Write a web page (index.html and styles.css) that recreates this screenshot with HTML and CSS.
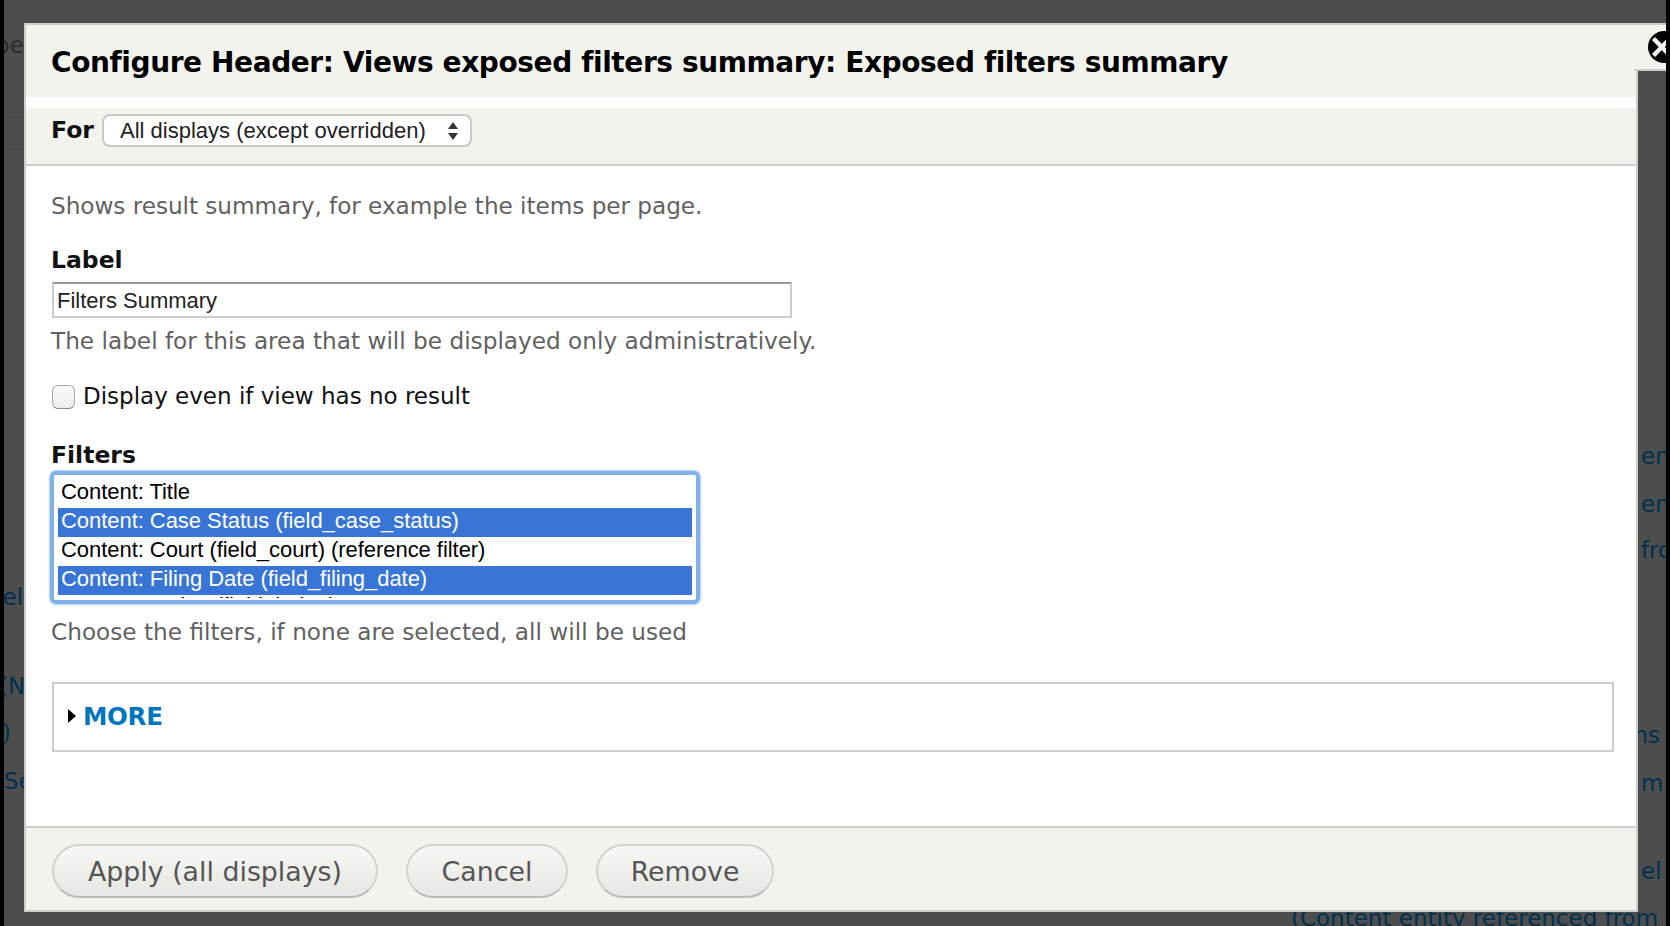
FILE: index.html
```html
<!DOCTYPE html>
<html lang="en">
<head>
<meta charset="utf-8">
<title>Configure Header</title>
<link rel="stylesheet" href="styles.css">
</head>
<body>
<div class="page">
  <div class="backdrop" aria-hidden="true">
    <span class="bg-line bg-h1"></span>
    <span class="bg-line bg-h2"></span>
    <span class="bg-line bg-v1"></span>
    <span class="bg-text t1">Type</span>
    <span class="bg-text t2">Label</span>
    <span class="bg-text t3">(N</span>
    <span class="bg-text t4">)</span>
    <span class="bg-text t5">Se</span>
    <span class="bg-text r1">en</span>
    <span class="bg-text r2">en</span>
    <span class="bg-text r3">fro</span>
    <span class="bg-text r4">ins</span>
    <span class="bg-text r5">m</span>
    <span class="bg-text r6">el</span>
    <span class="bg-text r7">(Content entity referenced from</span>
  </div>
  <section class="dialog">
    <header class="title-bar">
      <h1 class="title">Configure Header: Views exposed filters summary: Exposed filters summary</h1>
    </header>
    <div class="for-bar">
      <span class="for-label">For</span>
      <div class="select">
        <span>All displays (except overridden)</span>
        <svg class="select-arrows" viewBox="0 0 12 20" width="12" height="20" aria-hidden="true">
          <path d="M6 1L11 8H1zM6 19L1 12H11z" fill="#333"/>
        </svg>
      </div>
    </div>
    <div class="content">
      <p class="desc desc-intro">Shows result summary, for example the items per page.</p>
      <div class="field-label">Label</div>
      <input class="text-input" type="text" value="Filters Summary">
      <p class="desc desc-label">The label for this area that will be displayed only administratively.</p>
      <label class="check-row"><input class="checkbox" type="checkbox"><span>Display even if view has no result</span></label>
      <div class="field-label field-filters">Filters</div>
      <div class="listbox">
        <div class="listbox-inner">
          <div class="option">Content: Title</div>
          <div class="option selected">Content: Case Status (field_case_status)</div>
          <div class="option">Content: Court (field_court) (reference filter)</div>
          <div class="option selected">Content: Filing Date (field_filing_date)</div>
          <div class="option option-clipped">Content: Judge (field_judge)</div>
        </div>
      </div>
      <p class="desc desc-filters">Choose the filters, if none are selected, all will be used</p>
      <div class="more-box">
        <span class="more-arrow"></span>
        <a class="more-link">MORE</a>
      </div>
    </div>
    <footer class="footer">
      <button class="btn btn-apply">Apply (all displays)</button>
      <button class="btn btn-cancel">Cancel</button>
      <button class="btn btn-remove">Remove</button>
    </footer>
  </section>
  <div class="close-tab"></div>
  <svg class="close-icon" viewBox="0 0 32 32" width="32" height="32" aria-label="Close">
    <circle cx="16" cy="16" r="16" fill="#000"/>
    <path d="M5.5 7.5L22 24.5M22 7.5L5.5 24.5" stroke="#f3f3ee" stroke-width="4.5" fill="none"/>
  </svg>
</div>
</body>
</html>
```
FILE: styles.css
```css
* { box-sizing: border-box; }
html, body { margin: 0; padding: 0; height: 100%; overflow: hidden; background: #000; }
body { font-family: "DejaVu Sans", sans-serif; }

.page {
  position: relative;
  width: 1662px;
  height: 926px;
  margin: 0 4px;
  background: #4d4d4d;
  overflow: hidden;
}

/* Dimmed page behind the modal */
.backdrop { position: absolute; inset: 0; }
.bg-text {
  position: absolute;
  font-size: 23px;
  line-height: 28px;
  color: #00304f;
  white-space: nowrap;
}
.bg-line { position: absolute; background: #484848; }
.bg-h1 { left: 0; top: 117px; width: 20px; height: 1px; }
.bg-h2 { left: 0; top: 149px; width: 20px; height: 1px; }
.bg-v1 { left: 1268px; top: 912px; width: 1px; height: 14px; }
.t1 { left: -33px; top: 31px; color: #2c2c2c; }
.t2 { left: -43px; top: 583px; }
.t3 { left: -5px; top: 672px; }
.t4 { left: -2px; top: 719px; }
.t5 { left: 0; top: 767px; }
.r1 { left: 1637px; top: 442px; }
.r2 { left: 1637px; top: 490px; }
.r3 { left: 1637px; top: 536px; }
.r4 { left: 1623px; top: 721px; }
.r5 { left: 1637px; top: 769px; }
.r6 { left: 1637px; top: 857px; }
.r7 { left: 1287px; top: 904px; }

/* Close control */
.close-tab {
  position: absolute;
  left: 1630px;
  top: 23px;
  width: 32px;
  height: 48px;
  background: #f3f3ee;
  border-top: 2px solid #ccc;
  border-bottom: 2px solid #ccc;
}
.close-icon { position: absolute; left: 1644px; top: 31px; }

/* Modal */
.dialog {
  position: absolute;
  left: 20px;
  top: 23px;
  width: 1614px;
  height: 889px;
  display: flex;
  flex-direction: column;
  background: #fff;
  border: 2px solid #ccc;
}
.title-bar {
  height: 72px;
  padding: 4px 0 0 25px;
  display: flex;
  align-items: center;
  background: #f3f3ee;
}
.title {
  margin: 0;
  font-size: 28px;
  font-weight: 700;
  line-height: 36px;
  letter-spacing: -0.4px;
  color: #000;
  white-space: nowrap;
}
.for-bar {
  height: 58px;
  margin-top: 11px;
  padding: 6px 0 0 25px;
  display: flex;
  align-items: flex-start;
  gap: 8px;
  background: #f3f3ee;
  border-bottom: 2px solid #ccc;
}
.for-label {
  margin-top: 1px;
  font-size: 23.6px;
  font-weight: 700;
  line-height: 30px;
  color: #111;
}
.select {
  width: 370px;
  height: 33px;
  padding: 0 11px 0 16px;
  display: flex;
  align-items: center;
  justify-content: space-between;
  font-family: "Liberation Sans", sans-serif;
  font-size: 22px;
  color: #222;
  background: #fff;
  border: 2px solid #c8c8c8;
  border-radius: 8px;
}
.select-arrows { flex: none; }

.content {
  flex: 1;
  padding: 0 0 0 26px;
  display: flex;
  flex-direction: column;
  align-items: flex-start;
}
.desc {
  margin: 0 0 0 -1px;
  font-size: 23.2px;
  line-height: 30px;
  color: #616161;
  white-space: nowrap;
}
.desc-intro { margin-top: 25px; letter-spacing: -0.05px; }
.field-label {
  margin: 24px 0 0 -1px;
  font-size: 23.5px;
  font-weight: 700;
  line-height: 30px;
  color: #111;
}
.text-input {
  width: 740px;
  height: 36px;
  margin-top: 7px;
  padding: 2px 3px 0;
  font-family: "Liberation Sans", sans-serif;
  font-size: 22px;
  color: #222;
  background: #fff;
  border: 2px solid #ccc;
  border-top-color: #999;
  border-radius: 0;
  outline: none;
}
.desc-label { margin-top: 8px; }
.check-row {
  margin-top: 25px;
  display: flex;
  align-items: center;
  gap: 8px;
  font-size: 23px;
  line-height: 30px;
  color: #111;
}
.checkbox {
  appearance: none;
  width: 23px;
  height: 24px;
  margin: 2px 0 0;
  background: linear-gradient(#fafafa, #ececec);
  border: 1px solid #a8a8a8;
  border-bottom-color: #8a8a8a;
  border-radius: 6px;
}
.field-filters { margin-top: 29px; }
.listbox {
  width: 650px;
  height: 133px;
  margin-top: 1px;
  margin-left: -2px;
  padding: 4px 4px 2px;
  background: #fff;
  border: 4px solid #80b2e8;
  border-radius: 6px;
  box-shadow: 0 0 2px 1px #b3d0f0;
}
.listbox-inner { height: 119px; overflow: hidden; }
.option {
  height: 29px;
  padding: 0 3px;
  font-family: "Liberation Sans", sans-serif;
  font-size: 22px;
  line-height: 25px;
  letter-spacing: -0.05px;
  color: #000;
  white-space: nowrap;
}
.option-clipped { margin-top: -2px; }
.selected { background: #3875d7; color: #fff; }
.desc-filters { margin-top: 13px; }
.more-box {
  width: 1562px;
  height: 70px;
  margin-top: 35px;
  padding: 0 0 2px 14px;
  display: flex;
  align-items: center;
  gap: 7px;
  border: 2px solid #ccc;
}
.more-arrow {
  width: 0;
  height: 0;
  border-left: 8px solid #000;
  border-top: 7px solid transparent;
  border-bottom: 7px solid transparent;
}
.more-link {
  font-size: 24.5px;
  font-weight: 700;
  letter-spacing: -0.3px;
  color: #0076bf;
}
.footer {
  height: 84px;
  padding: 16px 0 0 26px;
  display: flex;
  align-items: flex-start;
  background: #f3f3ee;
  border-top: 2px solid #ccc;
}
.btn {
  height: 54px;
  padding: 0;
  font-family: "DejaVu Sans", sans-serif;
  font-size: 26.8px;
  color: #555;
  background: linear-gradient(#f7f7f4, #e6e6e2);
  border: 2px solid #d2d2d0;
  border-bottom-color: #bbb;
  border-radius: 27px;
}
.btn-apply { width: 326px; }
.btn-cancel { width: 162px; margin-left: 28px; }
.btn-remove { width: 178px; margin-left: 28px; }
```
